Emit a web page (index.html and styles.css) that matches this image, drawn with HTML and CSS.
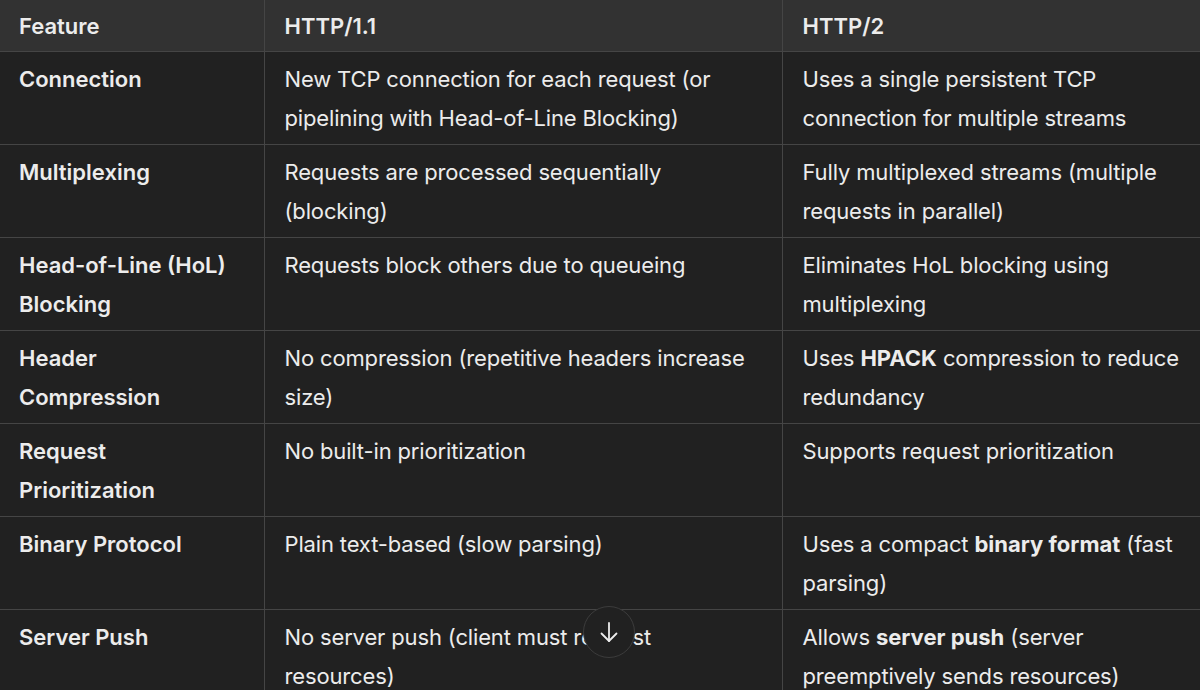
FILE: index.html
```html
<!DOCTYPE html>
<html>
<head>
<meta charset="utf-8">
<link rel="stylesheet" href="styles.css">
</head>
<body>
<div class="wrap">
<table class="cmp">
<colgroup><col class="c1"><col class="c2"><col class="c3"></colgroup>
<thead>
<tr><th>Feature</th><th>HTTP/1.1</th><th>HTTP/2</th></tr>
</thead>
<tbody>
<tr><td class="lbl">Connection</td><td>New TCP connection for each request (or pipelining with Head-of-Line Blocking)</td><td>Uses a single persistent TCP connection for multiple streams</td></tr>
<tr><td class="lbl">Multiplexing</td><td>Requests are processed sequentially (blocking)</td><td>Fully multiplexed streams (multiple requests in parallel)</td></tr>
<tr><td class="lbl">Head-of-Line (HoL) Blocking</td><td>Requests block others due to queueing</td><td>Eliminates HoL blocking using multiplexing</td></tr>
<tr><td class="lbl">Header Compression</td><td>No compression (repetitive headers increase size)</td><td>Uses <b>HPACK</b> compression to reduce redundancy</td></tr>
<tr><td class="lbl">Request Prioritization</td><td>No built-in prioritization</td><td>Supports request prioritization</td></tr>
<tr><td class="lbl">Binary Protocol</td><td>Plain text-based (slow parsing)</td><td>Uses a compact <b>binary format</b> (fast parsing)</td></tr>
<tr><td class="lbl">Server Push</td><td>No server push (client must request resources)</td><td>Allows <b>server push</b> (server preemptively sends resources)</td></tr>
</tbody>
</table>
<button class="scroll-btn" aria-label="Scroll down">
<svg width="24" height="24" viewBox="0 0 24 24" fill="none" stroke="#ececec" stroke-width="1.8" stroke-linecap="round" stroke-linejoin="round"><path d="M12 3v18"/><path d="M4.5 13.5 12 21l7.5-7.5"/></svg>
</button>
</div>
</body>
</html>
```
FILE: styles.css
```css
html, body {
  margin: 0;
  padding: 0;
  background: #212121;
  overflow: hidden;
}
.wrap {
  position: relative;
  width: 1200px;
  height: 690px;
  overflow: hidden;
}
.cmp {
  border-collapse: collapse;
  table-layout: fixed;
  width: 1202px;
  font-family: Inter, "Noto Sans", sans-serif;
  font-size: 22px;
  line-height: 39px;
  color: #ececec;
  letter-spacing: -0.15px;
}
.c1 { width: 264px; }
.c2 { width: 518px; }
.c3 { width: 420px; }
th, td {
  text-align: left;
  vertical-align: top;
  padding: 8px 32px 6px 20px;
  border-bottom: 1px solid #454545;
  border-left: 1px solid #454545;
}
th:first-child, td:first-child {
  border-left: none;
  padding-left: 19px;
  padding-right: 30px;
}
th:last-child, td:last-child { padding-right: 20px; }
th {
  background: #323232;
  font-weight: 600;
  letter-spacing: 0;
  padding-top: 7px;
  padding-bottom: 5px;
}
td { height: 78px; }
.lbl { font-weight: 600; letter-spacing: 0; }
b { font-weight: 700; letter-spacing: 0; }
.scroll-btn {
  position: absolute;
  left: 583px;
  top: 606px;
  width: 52px;
  height: 52px;
  border-radius: 50%;
  border: 1px solid #3c3c3c;
  background: #212121;
  display: flex;
  align-items: center;
  justify-content: center;
  padding: 0;
}
```
